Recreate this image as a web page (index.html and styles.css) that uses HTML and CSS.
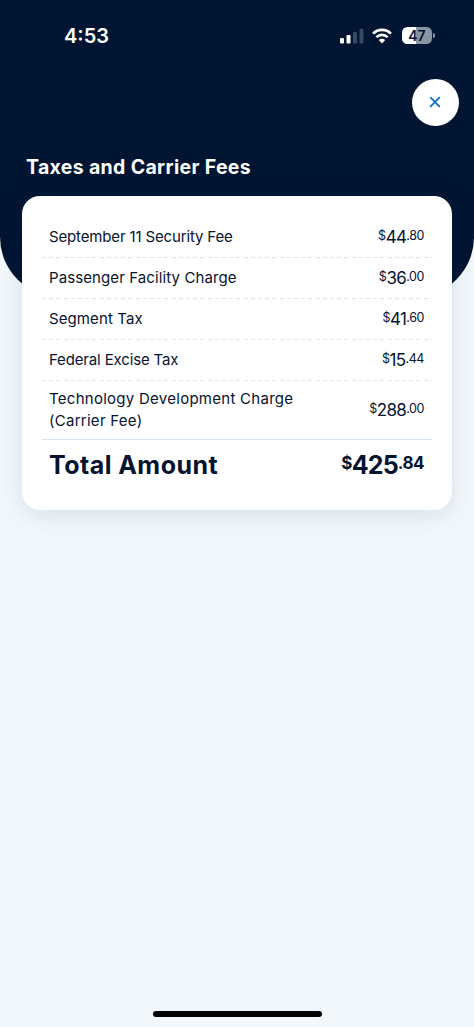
FILE: index.html
```
<!DOCTYPE html>
<html lang="en">
<head>
    <meta charset="UTF-8">
    <meta name="viewport" content="width=device-width, initial-scale=1.0">
    <title>Taxes and Carrier Fees</title>
    <link rel="stylesheet" href="styles.css">
</head>
<body>
    <header class="header">
        <div class="status-bar">
            <span class="time">4:53</span>
            <div class="status-icons">
                <svg class="signal" width="24" height="16" viewBox="0 0 24 16">
                    <rect x="0" y="10" width="4" height="5.5" rx="1.2" fill="#fff"/>
                    <rect x="6.5" y="7" width="4" height="8.5" rx="1.2" fill="#fff"/>
                    <rect x="13" y="4" width="4" height="11.5" rx="1.2" fill="#3b4861"/>
                    <rect x="19.5" y="0.7" width="4" height="14.8" rx="1.2" fill="#3b4861"/>
                </svg>
                <svg class="wifi" width="20" height="16" viewBox="0 0 20 16">
                    <g fill="none" stroke="#fff" stroke-width="2.7">
                        <path d="M1.1 5.6C6 .6 14 .6 18.9 5.6"/>
                        <path d="M4.4 9.1c3.1-3.1 8.1-3.1 11.2 0"/>
                    </g>
                    <path d="M6.8 12.1c1.8-1.7 4.6-1.7 6.4 0L10 15.4z" fill="#fff"/>
                </svg>
                <div class="battery">47</div>
            </div>
        </div>
        <button class="close-btn" aria-label="Close">
            <svg width="12" height="12" viewBox="0 0 12 12">
                <path d="M1.7 1.7l8.6 8.6M10.3 1.7l-8.6 8.6" stroke="#1670cb" stroke-width="1.9" stroke-linecap="round"/>
            </svg>
        </button>
        <h1>Taxes and Carrier Fees</h1>
    </header>

    <main class="card">
        <div class="row">
            <span class="label label-tight">September 11 Security Fee</span>
            <span class="amount"><sup>$</sup>44<sup>.80</sup></span>
        </div>
        <div class="row">
            <span class="label">Passenger Facility Charge</span>
            <span class="amount"><sup>$</sup>36<sup>.00</sup></span>
        </div>
        <div class="row">
            <span class="label">Segment Tax</span>
            <span class="amount"><sup>$</sup>41<sup>.60</sup></span>
        </div>
        <div class="row">
            <span class="label label-tight">Federal Excise Tax</span>
            <span class="amount"><sup>$</sup>15<sup>.44</sup></span>
        </div>
        <div class="row row-tall">
            <span class="label label-wide">Technology Development Charge<br>(Carrier Fee)</span>
            <span class="amount"><sup>$</sup>288<sup>.00</sup></span>
        </div>
        <div class="row total">
            <span class="label">Total Amount</span>
            <span class="amount"><sup>$</sup>425<sup>.84</sup></span>
        </div>
    </main>

    <div class="home-indicator"></div>
</body>
</html>
```
FILE: styles.css
```
* {
    box-sizing: border-box;
}
body {
    margin: 0;
    height: 1027px;
    display: flex;
    flex-direction: column;
    font-family: Inter, "Open Sans", sans-serif;
    color: #061331;
    background-color: #f2f7fb;
    overflow: hidden;
}
.header {
    height: 297px;
    flex-shrink: 0;
    display: flex;
    flex-direction: column;
    background-color: #001532;
    border-radius: 0 0 60px 60px;
    color: #fff;
}
.status-bar {
    height: 79px;
    padding: 21px 42px 0 64px;
    display: flex;
    align-items: flex-start;
    justify-content: space-between;
}
.time {
    font-size: 20px;
    font-weight: 600;
    line-height: 30px;
}
.status-icons {
    height: 29px;
    display: flex;
    align-items: center;
}
.wifi {
    margin: 0 10px 0 8px;
}
.battery {
    width: 30px;
    height: 17px;
    border-radius: 5.5px;
    background: linear-gradient(to right, #fff 48%, #8b94a3 48%);
    color: #001532;
    font-size: 14px;
    font-weight: 600;
    line-height: 17px;
    text-align: center;
    position: relative;
}
.battery::after {
    content: "";
    position: absolute;
    right: -3px;
    top: 6px;
    width: 2px;
    height: 5px;
    border-radius: 0 2px 2px 0;
    background-color: #8b94a3;
}
.close-btn {
    width: 47px;
    height: 47px;
    margin-right: 15px;
    align-self: flex-end;
    display: flex;
    align-items: center;
    justify-content: center;
    padding: 0 1px 1px 0;
    border: none;
    border-radius: 50%;
    background-color: #fff;
}
h1 {
    margin: 27px 0 0 26px;
    font-size: 19.5px;
    font-weight: 700;
    line-height: 28px;
    letter-spacing: 0.33px;
}
.card {
    height: 314px;
    flex-shrink: 0;
    margin: -101px 22px 0;
    padding: 21px 20px 0;
    border-radius: 18px;
    background-color: #fff;
    box-shadow: 0 4px 22px rgba(20, 50, 90, 0.12);
}
.row {
    height: 41px;
    padding: 0 8px 2px 7px;
    display: flex;
    align-items: center;
    justify-content: space-between;
    background: repeating-linear-gradient(to right, #dde3e9 0 4px, transparent 4px 7.2px) bottom / 100% 1px no-repeat;
}
.label {
    font-size: 15px;
    line-height: 22px;
    letter-spacing: 0.1px;
    white-space: nowrap;
}
.label-tight {
    letter-spacing: -0.15px;
}
.label-wide {
    letter-spacing: 0.27px;
}
.amount {
    font-size: 17px;
    line-height: 22px;
    letter-spacing: -0.7px;
}
.amount sup {
    font-size: 12.5px;
    line-height: 1;
    letter-spacing: -0.4px;
    vertical-align: 3px;
}
.row-tall {
    height: 59px;
    padding-bottom: 0;
    background: none;
    border-bottom: 1px solid #d5e4f0;
}
.total {
    height: 51px;
    background: none;
    font-weight: 700;
}
.total .label {
    font-size: 25px;
    letter-spacing: 0.45px;
}
.total .amount {
    font-size: 25px;
    letter-spacing: -0.9px;
}
.total .amount sup {
    font-size: 17px;
    letter-spacing: -0.5px;
    vertical-align: 5px;
}
.home-indicator {
    width: 169px;
    height: 6px;
    margin: auto auto 10px;
    border-radius: 3px;
    background-color: #000;
}
```
